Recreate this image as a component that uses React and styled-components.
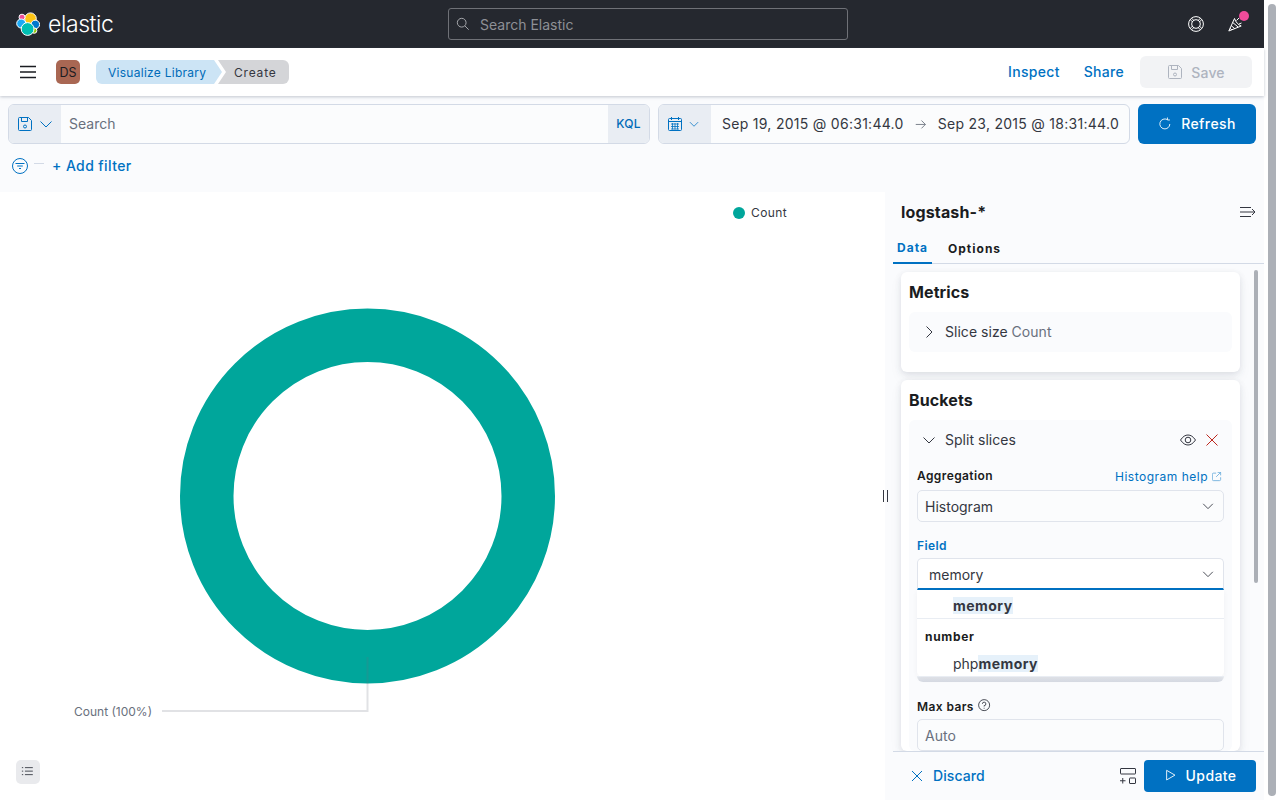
import React from 'react';
import styled, { createGlobalStyle } from 'styled-components';

const Global = createGlobalStyle`
  html, body { margin: 0; padding: 0; height: 800px; overflow: hidden; background: #fff; }
  body { font-family: Inter, "Liberation Sans", sans-serif; color: #343741; font-size: 14px; }
  * { box-sizing: border-box; }
`;

const Page = styled.div`display: flex; width: 1280px; height: 800px; overflow: hidden;`;
const Main = styled.div`width: 1264px; height: 800px; display: flex; flex-direction: column;`;
const PageTrack = styled.div`width: 16px; height: 800px; padding: 4px; background: #fff;`;
const PageThumb = styled.div`width: 8px; height: 792px; border-radius: 4px; background: #acb0b7;`;

const TopBar = styled.header`
  height: 48px; flex: none; background: #25282f; display: grid; grid-template-columns: 432px 400px 1fr;
  align-items: center; padding: 0 16px;
`;
const Brand = styled.div`display: flex; align-items: center; gap: 8px;`;
const Wordmark = styled.span`color: #fff; font-size: 23px; font-weight: 300; letter-spacing: -0.4px; line-height: 32px;`;
const GlobalSearch = styled.div`
  height: 32px; border: 1px solid #6f7177; border-radius: 3px; display: flex; align-items: center;
  padding-left: 7px; gap: 10px; color: #8e9096; font-size: 14px; background: #25282f;
`;
const HeaderIcons = styled.div`display: flex; justify-content: flex-end; align-items: center; gap: 24px; padding-right: 4px;`;
const HeaderIcon = styled.span`position: relative; display: flex; width: 16px; height: 16px;`;
const Dot = styled.span`position: absolute; top: -5px; right: -5px; width: 10px; height: 10px; border-radius: 50%; background: #ee4c9b;`;

const SubBar = styled.div`
  position: relative; height: 48px; flex: none; background: #fff; display: flex; align-items: center;
  padding: 0 12px 0 20px; box-shadow: 0 1px 3px rgba(90,100,120,.35); z-index: 2;
`;
const Burger = styled.span`display: flex; width: 16px; height: 16px; margin-right: 20px;`;
const Avatar = styled.span`
  width: 24px; height: 24px; border-radius: 5px; background: #a96753; color: #1a1c21; font-size: 12.5px;
  display: flex; align-items: center; justify-content: center; margin-right: 16px;
`;
const CrumbFirst = styled.span`
  height: 24px; width: 126px; padding-left: 12px; display: flex; align-items: center; font-size: 12px;
  letter-spacing: .27px; color: #006bb8; background: #cce4f5; border-radius: 6px 0 0 6px;
  clip-path: polygon(0 0, calc(100% - 8px) 0, 100% 50%, calc(100% - 8px) 100%, 0 100%);
`;
const CrumbLast = styled.span`
  height: 24px; width: 71px; margin-left: -4px; padding-left: 16px; display: flex; align-items: center; font-size: 12px;
  letter-spacing: .8px; color: #343741; background: #d4d5d8; border-radius: 0 6px 6px 0;
  clip-path: polygon(0 0, 100% 0, 100% 100%, 0 100%, 8px 50%);
`;
const SubActions = styled.div`margin-left: auto; display: flex; align-items: center;`;
const TextLink = styled.span`color: #0071c2; font-size: 14px; font-weight: 500; letter-spacing: .3px; margin-right: ${p => p.$mr}px; padding-bottom: 1px;`;
const SaveButton = styled.span`
  width: 112px; height: 32px; border-radius: 6px; background: #f2f3f5; color: #aeb4bf; font-weight: 500;
  display: flex; align-items: center; justify-content: center; gap: 8px; letter-spacing: .2px;
`;

const QueryArea = styled.div`height: 96px; flex: none; background: #fafbfd; padding: 8px 8px 0;`;
const QueryRow = styled.div`display: flex; gap: 8px; height: 40px;`;
const Group = styled.div`
  width: ${p => p.$w}px; flex: none; height: 40px; border: 1px solid #d3dae6; border-radius: 6px; display: flex; overflow: hidden;
  background: #fbfcfd;
`;
const Prepend = styled.div`
  width: 52px; flex: none; background: #e9edf3; display: flex; align-items: center; padding-left: 8px; gap: 5px;
`;
const SearchText = styled.div`flex: 1; display: flex; align-items: center; padding: 0 0 2px 8px; color: #69707d; font-size: 14px;`;
const Kql = styled.div`width: 41px; flex: none; background: #e9edf3; color: #006bb8; font-weight: 500; font-size: 12px; letter-spacing: .3px; padding-bottom: 1px; display: flex; align-items: center; justify-content: center;`;
const DateText = styled.span`font-size: 14px; color: #343741; letter-spacing: .28px; margin-bottom: 2px; white-space: nowrap;`;
const DateBody = styled.div`flex: 1; min-width: 0; display: flex; align-items: center; padding-left: 11px; gap: 10px;`;
const RefreshButton = styled.div`
  width: 118px; height: 40px; border-radius: 6px; background: #0071c2; color: #fff; font-weight: 500; font-size: 14px;
  display: flex; align-items: center; justify-content: center; gap: 9px; letter-spacing: .4px; padding-bottom: 1px;
`;
const FilterRow = styled.div`display: flex; align-items: center; height: 28px; margin-top: 8px; padding-left: 4px;`;
const Dash = styled.span`width: 10px; height: 1px; background: #d3dae6; margin: -5px 8px 0 6px;`;
const AddFilter = styled.span`color: #0071c2; font-weight: 500; font-size: 14px; letter-spacing: .4px; margin-bottom: 2px;`;

const Work = styled.div`flex: 1; min-height: 0; display: flex;`;
const ChartPane = styled.div`position: relative; width: 885px; flex: none; background: #fff;`;
const ChartSvg = styled.svg`display: block;`;
const Legend = styled.div`position: absolute; top: 13px; left: 733px; display: flex; align-items: center; gap: 6px; font-size: 12px; letter-spacing: .4px; color: #343741;`;
const LegendDot = styled.span`width: 12px; height: 12px; border-radius: 50%; background: #00a69b;`;
const ListToggle = styled.span`position: absolute; left: 16px; bottom: 16px; width: 24px; height: 24px; border-radius: 5px; background: #e9eaed; display: flex; align-items: center; justify-content: center;`;
const Handle = styled.span`position: absolute; right: -3px; top: 298px; width: 5px; height: 12px; border-left: 1px solid #343741; border-right: 1px solid #343741;`;

const Side = styled.aside`flex: 1; min-width: 0; background: #fafbfd; display: flex; flex-direction: column;`;
const SideHead = styled.div`height: 40px; flex: none; display: flex; align-items: center; justify-content: space-between; padding: 0 8px 0 16px;`;
const SideTitle = styled.h2`margin: 0; font-size: 16px; font-weight: 700; color: #1a1c21; letter-spacing: .15px;`;
const Tabs = styled.div`height: 32px; flex: none; margin-left: 8px; display: flex; border-bottom: 1px solid #d3dae6; gap: 12px;`;
const Tab = styled.span`
  height: 32px; padding: 0 4px; display: flex; align-items: center; font-size: 12px; font-weight: 700; letter-spacing: 1px;
  color: ${p => (p.$active ? '#0071c2' : '#1a1c21')};
  border-bottom: ${p => (p.$active ? '2px solid #0071c2' : '0')};
`;
const Scroll = styled.div`position: relative; flex: 1; min-height: 0; overflow: hidden; padding: 8px 24px 0 16px;`;
const InnerThumb = styled.span`position: absolute; right: 6px; top: 6px; width: 4px; height: 313px; border-radius: 2px; background: #acb0b7;`;
const Card = styled.section`
  background: #fff; border-radius: 6px; padding: 8px 8px ${p => p.$pb || 0}px; margin-bottom: 8px;
  box-shadow: 0 2px 6px rgba(60,70,90,.13), 0 6px 14px rgba(60,70,90,.05);
`;
const CardTitle = styled.h3`margin: 0 0 8px; font-size: 16px; line-height: 24px; font-weight: 700; color: #1a1c21; letter-spacing: .1px;`;
const Accordion = styled.div`background: #fafbfd; border-radius: 6px;`;
const AccHead = styled.div`height: 40px; display: flex; align-items: center; padding: 0 12px; gap: 8px; color: #343741; font-size: 14px;`;
const AccText = styled.span`margin-bottom: 2px; letter-spacing: .03px;`;
const Muted = styled.span`color: #69707d;`;
const AccIcons = styled.span`margin-left: auto; display: flex; align-items: center; gap: 8px;`;
const AccBody = styled.div`padding: 8px 8px 0;`;
const FormRow = styled.div`position: relative; margin-bottom: 16px;`;
const LabelRow = styled.div`height: 16px; margin-bottom: ${p => p.$mb || 4}px; display: flex; align-items: center; justify-content: space-between;`;
const Label = styled.span`
  font-size: 12px; font-weight: 600; letter-spacing: .4px; color: ${p => (p.$active ? '#0071c2' : '#1a1c21')};
  display: flex; align-items: center; gap: 4px; margin-bottom: 2px;
`;
const HelpLink = styled.span`font-size: 12px; color: #0071c2; display: flex; align-items: center; gap: 4px; letter-spacing: .5px;`;
const HelpIcon = styled.span`display: flex; margin-top: 3px;`;
const Field = styled.div`
  height: 32px; border: 1px solid #e0e4ec; border-radius: 5px; background: #fbfcfd; display: flex; align-items: center;
  padding: 0 8px 0 7px; justify-content: space-between; font-size: 14px; color: #343741;
`;
const FocusField = styled(Field)`
  background: #fff; padding-left: 11px; border-radius: 5px 5px 0 0; border-bottom: 2px solid #0071c2; color: #343741;
`;
const FocusValue = styled.span`margin-top: 2px;`;
const Placeholder = styled.span`color: #69707d;`;
const Dropdown = styled.div`
  position: absolute; top: 52px; left: 0; right: 0; height: 87px; background: #fff; z-index: 3; border-radius: 0 0 6px 6px;
  box-shadow: 0 2px 5px rgba(60,70,90,.06);
`;
const Option = styled.div`height: ${p => p.$h}px; padding: ${p => p.$pt || 0}px 0 0 36px; display: flex; align-items: center; font-size: 14px; color: #343741; border-bottom: 1px solid #e9edf3;`;
const Hit = styled.mark`background: #e6f1fa; color: #343741; font-weight: 700; letter-spacing: .45px; line-height: 17px;`;
const GroupLabel = styled.div`height: 32px; padding: 2px 0 0 8px; display: flex; align-items: center; font-size: 12px; font-weight: 700; letter-spacing: .7px; color: #1a1c21;`;
const Underlay = styled.div`height: 76px; margin-bottom: 17px; display: flex; align-items: flex-end;`;
const UnderField = styled.div`width: 100%; height: 32px; border-radius: 6px; background: linear-gradient(#fff 0, #fff 26px, #e6e9ee 27px, #d6dae3 100%);`;

const Footer = styled.div`height: 49px; flex: none; margin-left: 8px; border-top: 1px solid #d3dae6; display: flex; align-items: center; padding: 0 8px 0 16px; background: #fafbfd;`;
const Discard = styled.span`display: flex; align-items: center; gap: 8px; color: #0071c2; font-weight: 500; font-size: 14px; letter-spacing: .1px;`;
const DiscardText = styled.span`margin-bottom: 2px;`;
const FooterRight = styled.div`margin-left: auto; display: flex; align-items: center; gap: 8px;`;
const UpdateButton = styled.span`
  width: 112px; height: 32px; border-radius: 4px; background: #0071c2; color: #fff; font-weight: 500; font-size: 14px;
  display: flex; align-items: center; justify-content: center; gap: 8px; letter-spacing: .4px; padding-bottom: 1px;
`;

const I = ({ s = 16, c = 'currentColor', w = 1, vb = '0 0 16 16', children }) => (
  <svg width={s} height={s} viewBox={vb} fill="none" stroke={c} strokeWidth={w} style={{ display: 'block', flex: 'none' }}>{children}</svg>
);

const Logo = () => (
  <svg width="24" height="24" viewBox="0 0 24 24" style={{ display: 'block' }}>
    <circle cx="14.5" cy="6.7" r="5.8" fill="#fec514" stroke="#fff" />
    <circle cx="6" cy="5.2" r="3" fill="#f04e98" stroke="#fff" />
    <circle cx="5.2" cy="11.5" r="4.5" fill="#1ba9f5" stroke="#fff" />
    <circle cx="19.3" cy="12.5" r="4.3" fill="#0077cc" stroke="#fff" />
    <circle cx="18.2" cy="18.6" r="2.7" fill="#93c90e" stroke="#fff" />
    <circle cx="11.6" cy="17" r="6.4" fill="#00bfb3" stroke="#fff" />
  </svg>
);
const Chevron = ({ c = '#343741', s = 16 }) => <I s={s} c={c}><path d="M2.5 5.5 8 11l5.5-5.5" /></I>;
const SaveIcon = ({ c }) => (
  <I c={c}><path d="M1.5 2.5a1 1 0 0 1 1-1h9l3 3v9a1 1 0 0 1-1 1h-11a1 1 0 0 1-1-1z" /><path d="M4.5 1.5v4h6v-4" /><circle cx="8" cy="10.5" r="1.5" /></I>
);

export default function App() {
  return (
    <>
      <Global />
      <Page>
        <Main>
          <TopBar>
            <Brand>
              <Logo />
              <Wordmark>elastic</Wordmark>
            </Brand>
            <GlobalSearch>
              <I s={14} c="#b5b6ba"><circle cx="6.5" cy="6.5" r="5" /><path d="m10.2 10.2 4.3 4.3" /></I>
              <span>Search Elastic</span>
            </GlobalSearch>
            <HeaderIcons>
              <HeaderIcon>
                <I c="#fff"><circle cx="8" cy="8" r="7.4" /><circle cx="8" cy="8" r="4.3" /><path d="m2.2 3.6 2.6 2.6M3.6 2.2l2.6 2.6M12.4 2.2 9.8 4.8M13.8 3.6l-2.6 2.6M2.2 12.4l2.6-2.6M3.6 13.8l2.6-2.6M12.4 13.8 9.8 11.2M13.8 12.4l-2.6-2.6" /></I>
              </HeaderIcon>
              <HeaderIcon>
                <I c="#fff"><path d="M6.5 2.5.8 15l12.4-5C10.5 9 7.5 6 6.5 2.5z" /><path d="M4.6 6.4 10 10.9M3.1 9.6l3.8 3.2M1.9 12.2l2 1.7" /><path d="M8.5 4.5 11 2M11 8l2.5-1" /></I>
                <Dot />
              </HeaderIcon>
            </HeaderIcons>
          </TopBar>

          <SubBar>
            <Burger><I c="#1a1c21" w={1.6}><path d="M0 2.5h16M0 8h16M0 13.5h16" /></I></Burger>
            <Avatar>DS</Avatar>
            <CrumbFirst>Visualize Library</CrumbFirst>
            <CrumbLast>Create</CrumbLast>
            <SubActions>
              <TextLink $mr={24}>Inspect</TextLink>
              <TextLink $mr={16}>Share</TextLink>
              <SaveButton><SaveIcon c="#aeb4bf" />Save</SaveButton>
            </SubActions>
          </SubBar>

          <QueryArea>
            <QueryRow>
              <Group $w={642}>
                <Prepend><SaveIcon c="#0071c2" /><Chevron c="#0071c2" /></Prepend>
                <SearchText>Search</SearchText>
                <Kql>KQL</Kql>
              </Group>
              <Group $w={472}>
                <Prepend>
                  <I c="#0071c2"><rect x="1.5" y="2.5" width="13" height="12" rx="1" /><path d="M4.5 1v3M11.5 1v3M1.5 5.5h13" /><path d="M4 8h8M4 10.5h8M4 13h8M5.5 7v6.5M8 7v6.5M10.5 7v6.5" strokeWidth=".8" /></I>
                  <Chevron c="#0071c2" s={12} />
                </Prepend>
                <DateBody>
                  <DateText>Sep 19, 2015 @ 06:31:44.0</DateText>
                  <I s={14} c="#69707d"><path d="M2 8.500h11M8.500 4 13 8.500 8.500 13" /></I>
                  <DateText>Sep 23, 2015 @ 18:31:44.0</DateText>
                </DateBody>
              </Group>
              <RefreshButton>
                <I s={14} c="#fff"><path d="M13.5 8A5.7 5.7 0 1 1 10.5 2.9" /><path d="M10.8 .6v2.8h2.8" /></I>
                Refresh
              </RefreshButton>
            </QueryRow>
            <FilterRow>
              <I c="#0071c2"><circle cx="8" cy="8" r="7.5" /><path d="M3.5 5.5h9M5.2 8h5.6M7 10.5h2" /></I>
              <Dash />
              <AddFilter>+ Add filter</AddFilter>
            </FilterRow>
          </QueryArea>

          <Work>
            <ChartPane>
              <ChartSvg width="885" height="608" viewBox="0 192 885 608">
                <circle cx="367.5" cy="496" r="160.75" fill="none" stroke="#00a69b" strokeWidth="53.5" />
                <path d="M367.5 657V711H162" fill="none" stroke="rgba(105,112,125,.2)" strokeWidth="2" />
                <text x="74" y="715.5" fontSize="12" fill="#69707d" fontFamily="Inter, sans-serif">Count (100%)</text>
              </ChartSvg>
              <Legend><LegendDot />Count</Legend>
              <ListToggle>
                <I s={14} c="#343741"><path d="M4.5 3h9M4.5 7h9M4.5 11h9" /><path d="M1 3h1.5M1 7h1.5M1 11h1.5" /></I>
              </ListToggle>
              <Handle />
            </ChartPane>

            <Side>
              <SideHead>
                <SideTitle>logstash-*</SideTitle>
                <I c="#343741"><path d="M0 3.5h11M0 8h15M0 12.5h11M12 5l3 3-3 3" /></I>
              </SideHead>
              <Tabs>
                <Tab $active>Data</Tab>
                <Tab>Options</Tab>
              </Tabs>
              <Scroll>
                <InnerThumb />
                <Card $pb={20}>
                  <CardTitle>Metrics</CardTitle>
                  <Accordion>
                    <AccHead>
                      <I c="#343741"><path d="m5.5 2.5 5.5 5.5-5.5 5.5" /></I>
                      <AccText>Slice size <Muted>Count</Muted></AccText>
                    </AccHead>
                  </Accordion>
                </Card>
                <Card>
                  <CardTitle>Buckets</CardTitle>
                  <Accordion>
                    <AccHead>
                      <Chevron />
                      <AccText>Split slices</AccText>
                      <AccIcons>
                        <I c="#343741"><path d="M.5 8C3 4.400 5.300 3 8 3s5 1.400 7.500 5C13 11.600 10.700 13 8 13S3 11.600.5 8z" /><circle cx="8" cy="8" r="2.800" /></I>
                        <I c="#bd271e"><path d="m2.500 2.500 11 11M13.500 2.500l-11 11" /></I>
                      </AccIcons>
                    </AccHead>
                    <AccBody>
                      <FormRow>
                        <LabelRow $mb={6}>
                          <Label>Aggregation</Label>
                          <HelpLink>
                            Histogram help
                            <HelpIcon>
                              <I s={12} c="#5aa3d8"><path d="M5.500 1.500H2A1.500 1.500 0 0 0 .5 3v7A1.500 1.500 0 0 0 2 11.500h8a1.500 1.500 0 0 0 1.500-1.500V7" /><path d="M7.500.5h4v4M11.500.5l-6 6" /></I>
                            </HelpIcon>
                          </HelpLink>
                        </LabelRow>
                        <Field>Histogram<Chevron s={14} /></Field>
                      </FormRow>
                      <FormRow>
                        <LabelRow><Label $active>Field</Label></LabelRow>
                        <FocusField><FocusValue>memory</FocusValue><Chevron s={14} /></FocusField>
                        <Dropdown>
                          <Option $h={29} $pt={2}><Hit>memory</Hit></Option>
                          <GroupLabel>number</GroupLabel>
                          <Option $h={26}>php<Hit>memory</Hit></Option>
                        </Dropdown>
                      </FormRow>
                      <Underlay><UnderField /></Underlay>
                      <FormRow>
                        <LabelRow>
                          <Label>
                            Max bars
                            <I s={14} c="#343741"><circle cx="7" cy="7" r="6.300" /><path d="M5 5.500A2 2 0 1 1 7 7.600v1M7 10v1" /></I>
                          </Label>
                        </LabelRow>
                        <Field><Placeholder>Auto</Placeholder></Field>
                      </FormRow>
                    </AccBody>
                  </Accordion>
                </Card>
              </Scroll>
              <Footer>
                <Discard>
                  <I c="#0071c2"><path d="m3 3 10 10M13 3 3 13" /></I>
                  <DiscardText>Discard</DiscardText>
                </Discard>
                <FooterRight>
                  <I c="#343741"><rect x=".5" y=".5" width="15" height="5.500" rx=".5" /><rect x="9.500" y="10" width="6" height="5.500" rx=".5" /><path d="M0 12.750h5.500M2.750 10v5.500" /></I>
                  <UpdateButton>
                    <I s={14} c="#fff"><path d="M3 1.500 12.500 7 3 12.500z" /></I>
                    Update
                  </UpdateButton>
                </FooterRight>
              </Footer>
            </Side>
          </Work>
        </Main>
        <PageTrack><PageThumb /></PageTrack>
      </Page>
    </>
  );
}
